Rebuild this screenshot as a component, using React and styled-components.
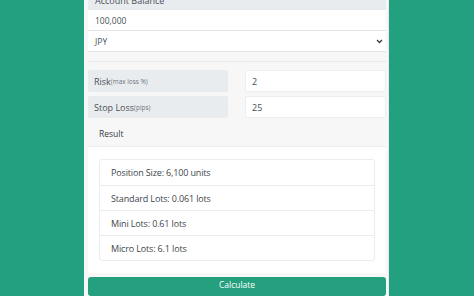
import React from 'react'
import styled, { createGlobalStyle } from 'styled-components'

const GlobalStyle = createGlobalStyle`
    html, body {
        margin: 0;
        padding: 0;
        background: #23a07f;
        font-family: "Open Sans", "Noto Sans", sans-serif;
        overflow: hidden;
    }
`

const Page = styled.div`
    width: 474px;
    height: 296px;
    overflow: hidden;
    display: flex;
    padding-left: 84px;
    box-sizing: border-box;
`

const Panel = styled.div`
    width: 298px;
    margin-top: -12px;
    padding: 0 2px 0 4px;
    background: #f7f7f8;
    border-right: 1px solid #ebe9f0;
    display: flex;
    flex-direction: column;
`

const Field = styled.div`
    display: flex;
    flex-direction: column;
`

const TopLabel = styled.div`
    height: 22px;
    background: #e9ecef;
    color: #495057;
    font-size: 9px;
    padding-left: 7px;
    display: flex;
    align-items: flex-end;
    padding-bottom: 3px;
    box-sizing: border-box;
`

const TextBox = styled.div`
    height: 21px;
    background: #fff;
    color: #495057;
    font-size: 8.5px;
    padding-left: 7px;
    display: flex;
    align-items: center;
    justify-content: space-between;
    border-bottom: 1px solid #e4e6e9;
    box-sizing: border-box;
`

const Chevron = styled.span`
    margin-right: 3px;
    display: flex;
`

const Divider = styled.div`
    margin-top: 8px;
    height: 2px;
    border-bottom: 1px solid #e9e9ec;
`

const Rows = styled.div`
    margin-top: 8px;
    display: flex;
    flex-direction: column;
    gap: 4px;
`

const Row = styled.div`
    display: grid;
    grid-template-columns: 140px 141px;
    justify-content: space-between;
    height: 22px;
`

const Addon = styled.div`
    background: #e9ecef;
    border-radius: 2px;
    color: #495057;
    font-size: 9px;
    padding-left: 6px;
    display: flex;
    align-items: center;
    small {
        font-size: 6.4px;
        color: #6c757d;
    }
`

const NumBox = styled.div`
    background: #fff;
    border: 1px solid #eceef1;
    border-radius: 2px;
    color: #495057;
    font-size: 9px;
    padding-left: 6px;
    display: flex;
    align-items: center;
`

const Card = styled.div`
    margin-top: 3px;
    display: flex;
    flex-direction: column;
`

const CardHeader = styled.div`
    height: 26px;
    background: #f7f7f7;
    border-bottom: 1px solid #eeeeef;
    color: #343a40;
    font-size: 8.5px;
    padding-left: 11px;
    display: flex;
    align-items: center;
    box-sizing: border-box;
`

const CardBody = styled.div`
    background: #fff;
    padding: 12px 11px 12px;
`

const List = styled.ul`
    margin: 0;
    padding: 0;
    list-style: none;
    border: 1px solid #ececee;
    border-radius: 3px;
`

const Item = styled.li`
    height: 25px;
    display: flex;
    align-items: center;
    padding-left: 11px;
    font-size: 9px;
    letter-spacing: -0.15px;
    color: #41464b;
    border-top: ${p => (p.$first ? 'none' : '1px solid #ececee')};
    box-sizing: border-box;
`

const Button = styled.button`
    margin-top: 4px;
    height: 26px;
    border: none;
    border-radius: 3px;
    background: #24a07e;
    color: #fff;
    font-family: inherit;
    font-size: 8.5px;
    padding-bottom: 5px;
`

const results = [
    'Position Size: 6,100 units',
    'Standard Lots: 0.061 lots',
    'Mini Lots: 0.61 lots',
    'Micro Lots: 6.1 lots',
]

const App = () => {
    return (
        <Page>
            <GlobalStyle />
            <Panel>
                <Field>
                    <TopLabel>Account Balance</TopLabel>
                    <TextBox>100,000</TextBox>
                    <TextBox>
                        JPY
                        <Chevron>
                            <svg width="7" height="5" viewBox="0 0 7 5">
                                <path d="M1 1l2.5 2.5L6 1" stroke="#343a40" strokeWidth="1.3" fill="none" />
                            </svg>
                        </Chevron>
                    </TextBox>
                </Field>
                <Divider />
                <Rows>
                    <Row>
                        <Addon>Risk<small>(max loss %)</small></Addon>
                        <NumBox>2</NumBox>
                    </Row>
                    <Row>
                        <Addon>Stop Loss<small>(pips)</small></Addon>
                        <NumBox>25</NumBox>
                    </Row>
                </Rows>
                <Card>
                    <CardHeader>Result</CardHeader>
                    <CardBody>
                        <List>
                            {results.map((r, i) => (
                                <Item key={r} $first={i === 0}>{r}</Item>
                            ))}
                        </List>
                    </CardBody>
                </Card>
                <Button>Calculate</Button>
            </Panel>
        </Page>
    )
}

export default App
